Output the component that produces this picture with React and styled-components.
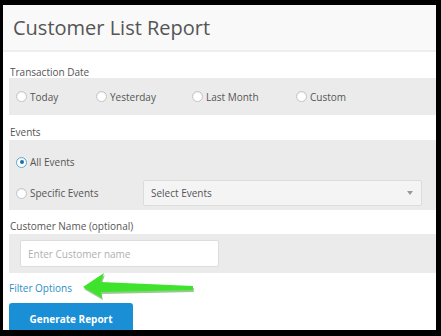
import styled, { createGlobalStyle } from "styled-components"

const Global = createGlobalStyle`
  html, body {
    margin: 0;
    padding: 0;
    background: #000;
    font-family: "Open Sans", "Liberation Sans", sans-serif;
  }
  * { box-sizing: border-box; }
`

function Radio({ label, checked, width }) {
  return (
    <RadioItem $width={width}>
      <Dot $checked={checked} />
      <span>{label}</span>
    </RadioItem>
  )
}

function Arrow() {
  return (
    <ArrowMark width="120" height="34" viewBox="0 0 120 34">
      <polygon
        points="3,19 24,5 21,14 113,18 113,22 21,24 22,30"
        fill="#2a9a1c"
        transform="translate(0.8,1)"
        opacity="0.5"
      />
      <polygon points="3,18 24,4 21,13 113,17 113,21 21,23 22,29" fill="#3fe22c" />
    </ArrowMark>
  )
}

export default function App() {
  return (
    <>
      <Global />
      <Frame>
        <Page>
          <Header>
            <h1>Customer List Report</h1>
          </Header>
          <Body>
            <Label $top={14}>Transaction Date</Label>
            <Band $height={37}>
              <RadioRow $pad={7}>
                <Radio label="Today" width={80} />
                <Radio label="Yesterday" width={96} />
                <Radio label="Last Month" width={104} />
                <Radio label="Custom" />
              </RadioRow>
            </Band>

            <Label $top={11}>Events</Label>
            <Band $height={70}>
              <Stack>
                <RadioRow $pad={7} $h={31}>
                  <Radio label="All Events" checked />
                </RadioRow>
                <RadioRow $pad={7} $h={31}>
                  <Radio label="Specific Events" width={127} />
                  <Select>
                    <span>Select Events</span>
                    <Caret />
                  </Select>
                </RadioRow>
              </Stack>
            </Band>

            <Label $top={10}>Customer Name (optional)</Label>
            <Band $height={39}>
              <InputWrap>
                <TextInput placeholder="Enter Customer name" />
              </InputWrap>
            </Band>

            <FilterRow>
              <FilterLink href="#">Filter Options</FilterLink>
              <Arrow />
            </FilterRow>

            <Button>Generate Report</Button>
          </Body>
        </Page>
      </Frame>
    </>
  )
}

const Frame = styled.div`
  width: 441px;
  height: 336px;
  padding: 5px 5px 6px 3px;
  background: #000;
  overflow: hidden;
`

const Page = styled.div`
  width: 433px;
  height: 325px;
  background: #fff;
  overflow: hidden;
`

const Header = styled.div`
  height: 47px;
  background: #f9f9f9;
  border-bottom: 2px solid #eeeeee;
  padding: 9px 0 0 10px;
  h1 {
    margin: 0;
    font-size: 20px;
    font-weight: 400;
    color: #555;
    line-height: 28px;
  }
`

const Body = styled.div`
  padding-left: 6px;
`

const Label = styled.div`
  margin-top: ${p => p.$top}px;
  padding-left: 1px;
  height: 12px;
  line-height: 12px;
  font-size: 10px;
  color: #555;
`

const Band = styled.div`
  margin-top: ${p => (p.$height === 37 ? 0 : 2)}px;
  height: ${p => p.$height}px;
  background: #ebebeb;
  display: flex;
  align-items: center;
`

const Stack = styled.div`
  display: flex;
  flex-direction: column;
  width: 100%;
  padding-top: 5px;
`

const RadioRow = styled.div`
  display: flex;
  align-items: center;
  padding-left: ${p => p.$pad}px;
  height: ${p => (p.$h ? p.$h + "px" : "auto")};
  width: 100%;
`

const RadioItem = styled.label`
  display: flex;
  align-items: center;
  gap: 3px;
  width: ${p => (p.$width ? p.$width + "px" : "auto")};
  flex-shrink: 0;
  font-size: 10px;
  color: #555;
`

const Dot = styled.span`
  width: 11px;
  height: 11px;
  border-radius: 50%;
  background: #fff;
  border: 1px solid ${p => (p.$checked ? "#5aa9d6" : "#c4c4c4")};
  box-shadow: inset 0 1px 1px rgba(0, 0, 0, 0.08);
  position: relative;
  &::after {
    content: "";
    display: ${p => (p.$checked ? "block" : "none")};
    position: absolute;
    left: 2.5px;
    top: 2.5px;
    width: 4px;
    height: 4px;
    border-radius: 50%;
    background: #1f6fa3;
  }
`

const Select = styled.div`
  width: 279px;
  height: 26px;
  background: #f4f4f4;
  border: 1px solid #dcdcdc;
  border-radius: 2px;
  display: flex;
  align-items: center;
  justify-content: space-between;
  padding: 0 8px 0 7px;
  font-size: 10px;
  color: #555;
`

const Caret = styled.span`
  width: 0;
  height: 0;
  border-left: 3px solid transparent;
  border-right: 3px solid transparent;
  border-top: 4px solid #999;
`

const InputWrap = styled.div`
  padding-left: 11px;
`

const TextInput = styled.input`
  width: 199px;
  height: 27px;
  background: #fff;
  border: 1px solid #dcdcdc;
  border-radius: 2px;
  padding: 0 7px;
  font-family: inherit;
  font-size: 10px;
  color: #555;
  outline: none;
  &::placeholder {
    color: #b0b0b0;
  }
`

const FilterRow = styled.div`
  position: relative;
  height: 26px;
  display: flex;
  align-items: center;
  padding-top: 3px;
`

const FilterLink = styled.a`
  font-size: 10px;
  color: #2b8fc4;
  text-decoration: none;
`

const ArrowMark = styled.svg`
  position: absolute;
  left: 71px;
  top: -4px;
`

const Button = styled.button`
  margin-top: 4px;
  width: 124px;
  height: 32px;
  background: #1a8fd6;
  border: none;
  border-radius: 3px 3px 0 0;
  color: #fff;
  font-family: inherit;
  font-weight: 700;
  font-size: 10px;
`
